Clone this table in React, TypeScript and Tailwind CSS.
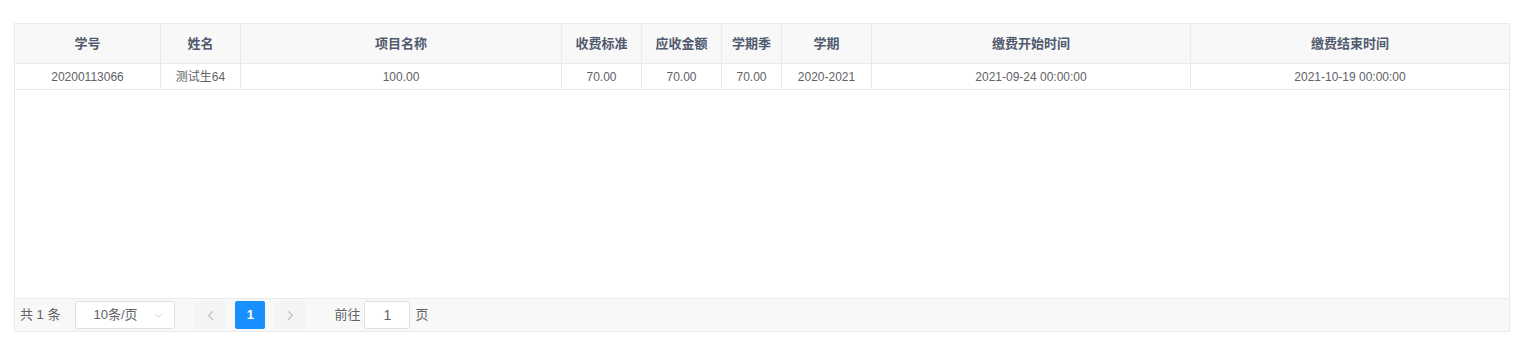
import { ChevronLeft, ChevronRight, ChevronDown } from 'lucide-react';

const columns = ['学号', '姓名', '项目名称', '收费标准', '应收金额', '学期季', '学期', '缴费开始时间', '缴费结束时间'];

const rows = [
  ['20200113066', '测试生64', '100.00', '70.00', '70.00', '70.00', '2020-2021', '2021-09-24 00:00:00', '2021-10-19 00:00:00'],
];

const font = { fontFamily: '"Liberation Sans", Arial, "Noto Sans CJK SC", sans-serif' };

export default function App() {
  return (
    <div className="bg-white w-[1519px] h-[349px] pt-[23px] pl-[14px]" style={font}>
      <div className="w-[1496px] border border-[#e8eaec] flex flex-col">
        {/* table body */}
        <div className="h-[274px] flex flex-col">
          <div className="grid grid-cols-[146px_80px_321px_80px_80px_60px_90px_319px_318px] bg-[#f8f8f9] border-b border-[#e8eaec]">
            {columns.map((c, i) => (
              <div
                key={c}
                className={`h-[39px] flex items-center justify-center text-[13px] font-bold text-[#515a6e] ${i < columns.length - 1 ? 'border-r border-[#e8eaec]' : ''}`}
              >
                {c}
              </div>
            ))}
          </div>
          {rows.map((r, ri) => (
            <div key={ri} className="grid grid-cols-[146px_80px_321px_80px_80px_60px_90px_319px_318px] border-b border-[#e8eaec]">
              {r.map((v, i) => (
                <div
                  key={i}
                  className={`h-[25px] flex items-center justify-center text-[12px] text-[#606266] ${i < r.length - 1 ? 'border-r border-[#e8eaec]' : ''}`}
                >
                  {v}
                </div>
              ))}
            </div>
          ))}
        </div>

        {/* pagination */}
        <div className="h-[33px] border-t border-[#e8eaec] bg-[#f8f8f9] flex items-center pl-[5px] text-[13px] text-[#606266]">
          <span>共 1 条</span>
          <div className="ml-[15px] w-[100px] h-[28px] bg-white border border-[#dcdfe6] rounded-[3px] flex items-center pl-[17px] pr-[9px] text-[#606266]">
            <span className="flex-1">10条/页</span>
            <ChevronDown size={13} className="text-[#c0c4cc]" strokeWidth={1.5} />
          </div>
          <div className="ml-[20px] w-[30px] h-[28px] bg-[#f4f4f5] rounded-[2px] flex items-center justify-center">
            <ChevronLeft size={15} className="text-[#c0c4cc]" strokeWidth={2.2} />
          </div>
          <div className="ml-[10px] w-[30px] h-[28px] bg-[#1890ff] rounded-[2px] flex items-center justify-center text-white font-bold">
            1
          </div>
          <div className="ml-[10px] w-[30px] h-[28px] bg-[#f4f4f5] rounded-[2px] flex items-center justify-center">
            <ChevronRight size={15} className="text-[#c0c4cc]" strokeWidth={2.2} />
          </div>
          <span className="ml-[29px]">前往</span>
          <div className="ml-[4px] w-[46px] h-[28px] bg-white border border-[#dcdfe6] rounded-[3px] flex items-center justify-center text-[14px]">
            1
          </div>
          <span className="ml-[5px]">页</span>
        </div>
      </div>
    </div>
  );
}
